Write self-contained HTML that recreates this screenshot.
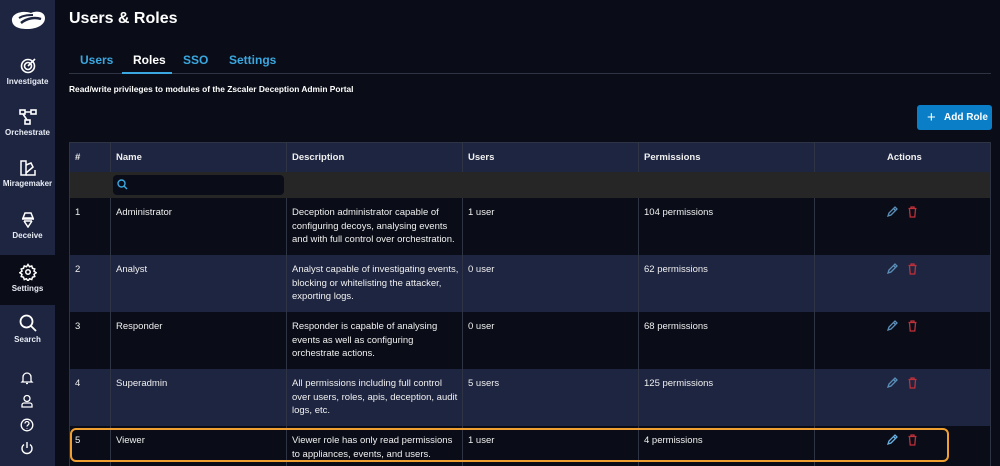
<!DOCTYPE html>
<html><head><style>
*{margin:0;padding:0;box-sizing:border-box}
body{width:1000px;height:466px;background:#0a0d17;font-family:"Liberation Sans",sans-serif;color:#fff;overflow:hidden;position:relative}
.sb{position:absolute;left:0;top:0;width:55px;height:466px;background:#1e2540}
.it{position:absolute;left:0;width:55px;text-align:center;font-size:8px;font-weight:bold;color:#e8ecf5}
.it svg{display:block;margin:0 auto 3px}
.abs{position:absolute}
.t{position:absolute;font-size:9.5px;line-height:13.5px;color:#f0f0f0}
.vl{position:absolute;width:1px;background:#2e3444}
.row{position:absolute;left:69px;width:922px}
</style></head><body>
<div class="sb">
 <svg class="abs" style="left:9px;top:9px" width="38" height="22" viewBox="0 0 38 22"><path d="M3 12 C2 4 14 1 22 4 C28 1 36 3 36 9 C36 16 28 20 18 20 C10 20 4 18 3 12Z" fill="#fff"/><path d="M12 14 C18 9 26 8 32 10" stroke="#1e2540" stroke-width="2.5" fill="none"/><path d="M10 9 C15 6 20 6 24 6" stroke="#1e2540" stroke-width="2" fill="none"/></svg>
 <div class="it" style="top:58px"><svg width="16" height="16" viewBox="0 0 16 16" fill="none" stroke="#fff" stroke-width="1.6"><circle cx="8" cy="8" r="6.5"/><circle cx="8" cy="8" r="3.5"/><path d="M8 8 L15 1"/></svg>Investigate</div>
 <div class="it" style="top:109px"><svg width="18" height="16" viewBox="0 0 18 16" fill="none" stroke="#fff" stroke-width="1.6"><rect x="1" y="1" width="5" height="4"/><rect x="12" y="1" width="5" height="4"/><rect x="6" y="11" width="5" height="4"/><path d="M6 3h6M4 5l4 6"/></svg>Orchestrate</div>
 <div class="it" style="top:160px"><svg width="16" height="16" viewBox="0 0 16 16" fill="none" stroke="#fff" stroke-width="1.5"><rect x="1" y="1" width="5" height="14"/><path d="M6 5l5-2 2 4-7 6M6 15h9v-5"/></svg>Miragemaker</div>
 <div class="it" style="top:211px"><svg width="16" height="17" viewBox="0 0 16 17" fill="none" stroke="#fff" stroke-width="1.5"><path d="M5 2h6l2 5H3z M2 8h12 M4 10l4 6 4-6 M4 10h8"/></svg>Deceive</div>
 <div class="abs" style="left:0;top:255px;width:55px;height:50px;background:#0a0d17"></div>
 <div class="it" style="top:263px"><svg width="18" height="18" viewBox="0 0 24 24" fill="none" stroke="#fff" stroke-width="2"><circle cx="12" cy="12" r="3"/><path d="M12 2l2 3 3-1 1 3 3 1-1 3 3 2-3 2 1 3-3 1-1 3-3-1-2 3-2-3-3 1-1-3-3-1 1-3-3-2 3-2-1-3 3-1 1-3 3 1z"/></svg>Settings</div>
 <div class="it" style="top:314px"><svg width="18" height="18" viewBox="0 0 18 18" fill="none" stroke="#fff" stroke-width="1.8"><circle cx="7.5" cy="7.5" r="6"/><path d="M12 12l5 5"/></svg>Search</div>
 <svg class="abs" style="left:20px;top:371px" width="14" height="14" viewBox="0 0 14 14" fill="none" stroke="#fff" stroke-width="1.3"><path d="M3 10V6a4 4 0 018 0v4l1 1H2z M6 12.5h2"/></svg>
 <svg class="abs" style="left:20px;top:394px" width="14" height="14" viewBox="0 0 14 14" fill="none" stroke="#fff" stroke-width="1.3"><circle cx="7" cy="4.5" r="3"/><path d="M2 13v-2a2 2 0 012-2h6a2 2 0 012 2v2z"/></svg>
 <svg class="abs" style="left:20px;top:418px" width="14" height="14" viewBox="0 0 14 14" fill="none" stroke="#fff" stroke-width="1.3"><circle cx="7" cy="7" r="5.8"/><path d="M5 5.5a2 2 0 114 0c0 1.5-2 1.5-2 3M7 10v.5"/></svg>
 <svg class="abs" style="left:20px;top:441px" width="14" height="14" viewBox="0 0 14 14" fill="none" stroke="#fff" stroke-width="1.4"><path d="M4 3.5a5 5 0 106 0M7 1v6"/></svg>
</div>
<div class="abs" style="left:69px;top:10px;font-size:16px;font-weight:bold">Users &amp; Roles</div>
<div class="abs" style="left:80px;top:53px;font-size:12px;font-weight:bold;color:#3ba7e0">Users</div>
<div class="abs" style="left:133px;top:53px;font-size:12px;font-weight:bold;color:#fff">Roles</div>
<div class="abs" style="left:183px;top:53px;font-size:12px;font-weight:bold;color:#3ba7e0">SSO</div>
<div class="abs" style="left:229px;top:53px;font-size:12px;font-weight:bold;color:#3ba7e0">Settings</div>
<div class="abs" style="left:69px;top:73px;width:922px;height:1px;background:#2e3444"></div>
<div class="abs" style="left:122px;top:72px;width:50px;height:2px;background:#3ba7e0"></div>
<div class="abs" style="left:69px;top:84px;font-size:8.4px;font-weight:bold">Read/write privileges to modules of the Zscaler Deception Admin Portal</div>
<div class="abs" style="left:917px;top:105px;width:75px;height:25px;background:#0a7fc8;border-radius:3px;font-size:10px;font-weight:bold;line-height:25px;padding-left:27px"><span class="abs" style="left:10px;top:0;font-size:15px;font-weight:normal">+</span>Add Role</div>
<div class="row" style="top:142px;height:1px;background:#2e3444"></div>
<div class="row" style="top:143px;height:29px;background:#1e2540"></div>
<div class="row" style="top:172px;height:26px;background:#262626"></div>
<div class="row" style="top:198px;height:57px;background:#0a0d17"></div>
<div class="row" style="top:255px;height:57px;background:#1e2540"></div>
<div class="row" style="top:312px;height:57px;background:#0a0d17"></div>
<div class="row" style="top:369px;height:57px;background:#1e2540"></div>
<div class="row" style="top:426px;height:40px;background:#0a0d17"></div>
<div class="vl" style="left:69px;top:143px;height:323px"></div><div class="vl" style="left:990px;top:143px;height:323px"></div>
<div class="vl" style="left:110px;top:143px;height:29px"></div><div class="vl" style="left:110px;top:198px;height:268px"></div>
<div class="vl" style="left:286px;top:143px;height:29px"></div><div class="vl" style="left:286px;top:198px;height:268px"></div>
<div class="vl" style="left:462px;top:143px;height:29px"></div><div class="vl" style="left:462px;top:198px;height:268px"></div>
<div class="vl" style="left:638px;top:143px;height:29px"></div><div class="vl" style="left:638px;top:198px;height:268px"></div>
<div class="vl" style="left:814px;top:143px;height:29px"></div><div class="vl" style="left:814px;top:198px;height:268px"></div>
<div class="abs" style="left:113px;top:175px;width:171px;height:20px;background:#0a0d17;border-radius:4px"></div>
<svg class="abs" style="left:117px;top:179px" width="11" height="11" viewBox="0 0 11 11" fill="none" stroke="#3ba7e0" stroke-width="1.4"><circle cx="4.5" cy="4.5" r="3.5"/><path d="M7 7l3 3"/></svg>
<div class="t" style="left:75px;top:151px;font-weight:bold">#</div>
<div class="t" style="left:116px;top:151px;font-weight:bold">Name</div>
<div class="t" style="left:292px;top:151px;font-weight:bold">Description</div>
<div class="t" style="left:468px;top:151px;font-weight:bold">Users</div>
<div class="t" style="left:644px;top:151px;font-weight:bold">Permissions</div>
<div class="t" style="left:887px;top:151px;font-weight:bold">Actions</div>

<div class="t" style="left:75px;top:206px">1</div><div class="t" style="left:116px;top:206px">Administrator</div>
<div class="t" style="left:292px;top:206px">Deception administrator capable of<br>configuring decoys, analysing events<br>and with full control over orchestration.</div>
<div class="t" style="left:468px;top:206px">1 user</div><div class="t" style="left:644px;top:206px">104 permissions</div>

<div class="t" style="left:75px;top:263px">2</div><div class="t" style="left:116px;top:263px">Analyst</div>
<div class="t" style="left:292px;top:263px">Analyst capable of investigating events,<br>blocking or whitelisting the attacker,<br>exporting logs.</div>
<div class="t" style="left:468px;top:263px">0 user</div><div class="t" style="left:644px;top:263px">62 permissions</div>

<div class="t" style="left:75px;top:320px">3</div><div class="t" style="left:116px;top:320px">Responder</div>
<div class="t" style="left:292px;top:320px">Responder is capable of analysing<br>events as well as configuring<br>orchestrate actions.</div>
<div class="t" style="left:468px;top:320px">0 user</div><div class="t" style="left:644px;top:320px">68 permissions</div>

<div class="t" style="left:75px;top:377px">4</div><div class="t" style="left:116px;top:377px">Superadmin</div>
<div class="t" style="left:292px;top:377px">All permissions including full control<br>over users, roles, apis, deception, audit<br>logs, etc.</div>
<div class="t" style="left:468px;top:377px">5 users</div><div class="t" style="left:644px;top:377px">125 permissions</div>

<div class="t" style="left:75px;top:434px">5</div><div class="t" style="left:116px;top:434px">Viewer</div>
<div class="t" style="left:292px;top:434px">Viewer role has only read permissions<br>to appliances, events, and users.</div>
<div class="t" style="left:468px;top:434px">1 user</div><div class="t" style="left:644px;top:434px">4 permissions</div>

<div class="abs" style="left:70px;top:428px;width:879px;height:34px;border:2px solid #f0a030;border-radius:6px"></div>
<svg width="0" height="0" style="position:absolute"><defs>
<g id="pe"><path d="M1 10l1-3 6-6 2 2-6 6z M6.5 2.5l2 2" fill="none" stroke="#5b8fb8" stroke-width="1.3"/></g>
<g id="tr"><path d="M1.5 2.5h8 M4 2.5V1h3v1.5 M2.5 3l.7 8h4.6l.7-8" fill="none" stroke="#c0303a" stroke-width="1.3"/></g>
</defs></svg>
<svg class="abs" style="left:887px;top:206px" width="11" height="11"><use href="#pe"/></svg><svg class="abs" style="left:907px;top:206px" width="11" height="12"><use href="#tr"/></svg>
<svg class="abs" style="left:887px;top:263px" width="11" height="11"><use href="#pe"/></svg><svg class="abs" style="left:907px;top:263px" width="11" height="12"><use href="#tr"/></svg>
<svg class="abs" style="left:887px;top:320px" width="11" height="11"><use href="#pe"/></svg><svg class="abs" style="left:907px;top:320px" width="11" height="12"><use href="#tr"/></svg>
<svg class="abs" style="left:887px;top:377px" width="11" height="11"><use href="#pe"/></svg><svg class="abs" style="left:907px;top:377px" width="11" height="12"><use href="#tr"/></svg>
<svg class="abs" style="left:887px;top:434px" width="11" height="11"><path d="M1 10l1-3 6-6 2 2-6 6z M6.5 2.5l2 2" fill="none" stroke="#6ab0e0" stroke-width="1.3"/></svg><svg class="abs" style="left:907px;top:434px" width="11" height="12"><use href="#tr"/></svg>
</body></html>
